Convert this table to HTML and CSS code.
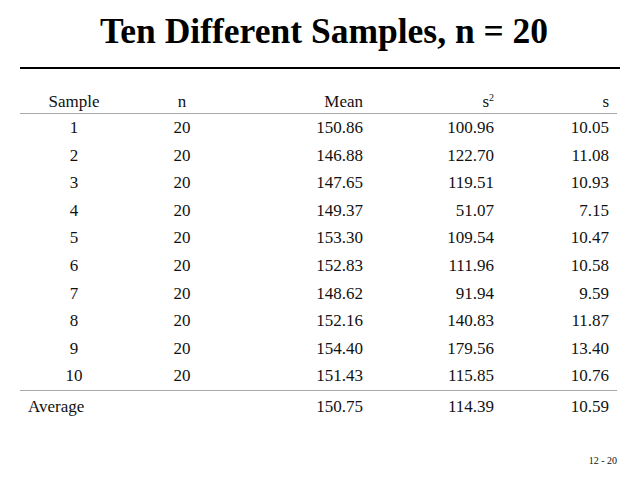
FILE: index.html
```html
<!DOCTYPE html>
<html lang="en">
<head>
<meta charset="utf-8">
<title>Ten Different Samples, n = 20</title>
<link rel="stylesheet" href="styles.css">
</head>
<body>
<div class="slide">
  <h1 class="title">Ten Different Samples, n = 20</h1>
  <div class="rule"></div>
  <div class="table">
    <div class="row head">
      <div class="c c1">Sample</div>
      <div class="c c2">n</div>
      <div class="c c3">Mean</div>
      <div class="c c4">s<span class="sup">2</span></div>
      <div class="c c5">s</div>
    </div>
    <div class="row"><div class="c c1">1</div><div class="c c2">20</div><div class="c c3">150.86</div><div class="c c4">100.96</div><div class="c c5">10.05</div></div>
    <div class="row"><div class="c c1">2</div><div class="c c2">20</div><div class="c c3">146.88</div><div class="c c4">122.70</div><div class="c c5">11.08</div></div>
    <div class="row"><div class="c c1">3</div><div class="c c2">20</div><div class="c c3">147.65</div><div class="c c4">119.51</div><div class="c c5">10.93</div></div>
    <div class="row"><div class="c c1">4</div><div class="c c2">20</div><div class="c c3">149.37</div><div class="c c4">51.07</div><div class="c c5">7.15</div></div>
    <div class="row"><div class="c c1">5</div><div class="c c2">20</div><div class="c c3">153.30</div><div class="c c4">109.54</div><div class="c c5">10.47</div></div>
    <div class="row"><div class="c c1">6</div><div class="c c2">20</div><div class="c c3">152.83</div><div class="c c4">111.96</div><div class="c c5">10.58</div></div>
    <div class="row"><div class="c c1">7</div><div class="c c2">20</div><div class="c c3">148.62</div><div class="c c4">91.94</div><div class="c c5">9.59</div></div>
    <div class="row"><div class="c c1">8</div><div class="c c2">20</div><div class="c c3">152.16</div><div class="c c4">140.83</div><div class="c c5">11.87</div></div>
    <div class="row"><div class="c c1">9</div><div class="c c2">20</div><div class="c c3">154.40</div><div class="c c4">179.56</div><div class="c c5">13.40</div></div>
    <div class="row last"><div class="c c1">10</div><div class="c c2">20</div><div class="c c3">151.43</div><div class="c c4">115.85</div><div class="c c5">10.76</div></div>
    <div class="row avg"><div class="c c1 left">Average</div><div class="c c2"></div><div class="c c3">150.75</div><div class="c c4">114.39</div><div class="c c5">10.59</div></div>
  </div>
  <div class="footer">12 - 20</div>
</div>
</body>
</html>
```
FILE: styles.css
```css
html, body {
  margin: 0;
  padding: 0;
  background: #ffffff;
}

.slide {
  width: 638px;
  height: 478px;
  display: flex;
  flex-direction: column;
  font-family: "Liberation Serif", "Times New Roman", serif;
  color: #111111;
  box-sizing: border-box;
  padding-bottom: 11px;
}

.title {
  margin: 0;
  padding-top: 11px;
  padding-left: 10px;
  font-size: 35.5px;
  line-height: 40px;
  font-weight: bold;
  text-align: center;
  color: #000000;
}

.rule {
  margin: 16px 18px 0 20px;
  height: 2px;
  background: #000000;
}

.table {
  margin: 21px 0 0 20px;
  width: 597px;
  font-size: 17px;
}

.row {
  display: grid;
  grid-template-columns: 108px 108px 134px 131px 116px;
  line-height: 27.6px;
  height: 27.6px;
}

.row.head {
  height: 23px;
  line-height: 23px;
  border-bottom: 1px solid #a8a8a8;
}

.row.last {
  border-bottom: 1px solid #a8a8a8;
}

.row.avg {
  padding-top: 2px;
}

.c1, .c2 {
  text-align: center;
}

.c1.left {
  text-align: left;
  padding-left: 8px;
}

.c3, .c4 {
  text-align: right;
  padding-right: 7px;
}

.c5 {
  text-align: right;
  padding-right: 8px;
}

.sup {
  font-size: 10px;
  vertical-align: 6px;
  line-height: 0;
}

.footer {
  margin-top: auto;
  align-self: flex-end;
  margin-right: 21px;
  font-size: 10px;
  line-height: 12px;
}
```
